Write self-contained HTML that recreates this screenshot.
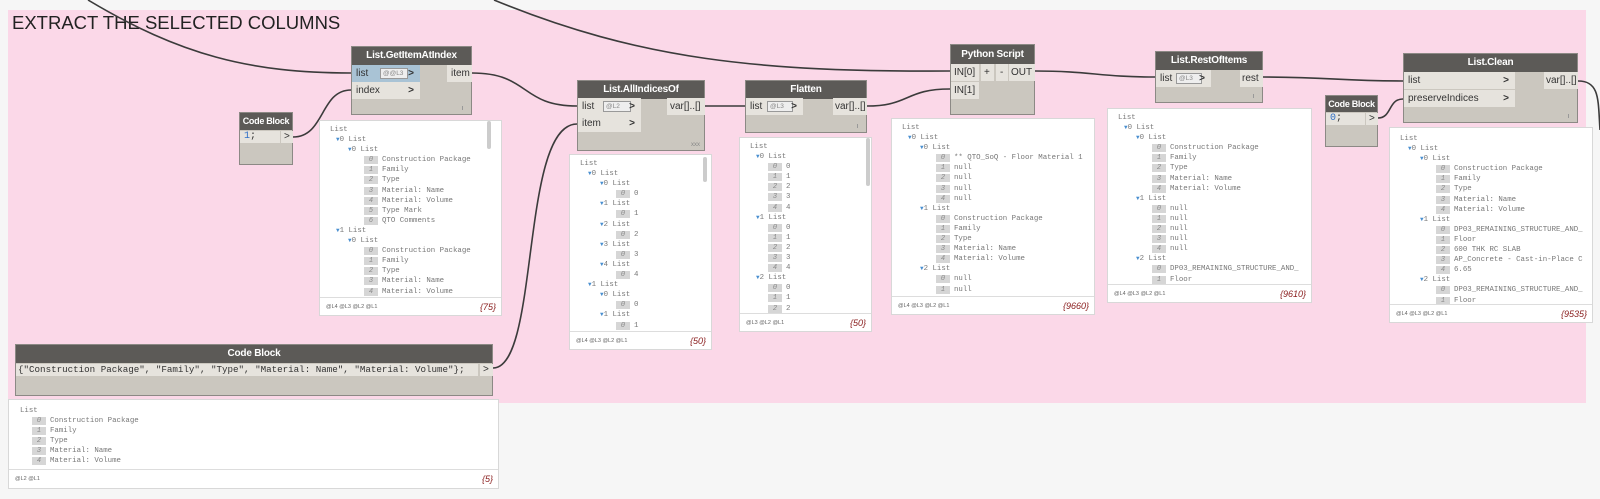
<!DOCTYPE html>
<html><head><meta charset="utf-8">
<style>
*{margin:0;padding:0;box-sizing:border-box}
body{width:1600px;height:499px;background:#f6f6f6;position:relative;overflow:hidden;font-family:"Liberation Sans",sans-serif}
.grp{position:absolute;left:8px;top:10px;width:1578px;height:393px;background:#fbd8e8}
.title{position:absolute;left:12px;top:12px;font-size:18.5px;color:#222;white-space:nowrap}
svg{position:absolute;left:0;top:0}
.node{position:absolute;background:#cbc7bf;border:1px solid #8c8985}
.hd{background:#5c5a57;color:#fff;font-weight:bold;font-size:10px;text-align:center;height:18px;line-height:18px;letter-spacing:-0.2px;white-space:nowrap}
.p{position:absolute;background:#e6e3dd;font-size:10px;color:#333;height:17px;line-height:17px;padding-left:4px;white-space:nowrap;overflow:hidden}
.sel{background:#a9c3d5}
.chev{position:absolute;right:6px;top:0;font-weight:bold;font-size:10px}
.lv{position:absolute;top:3px;height:11px;border:1px solid #999;background:#eee;font-size:6.5px;line-height:9px;color:#888;padding-left:2px}
.pv{position:absolute;background:#fff;border:1px solid #d8d8d8;overflow:hidden}
.ct{position:absolute;left:0;top:4px;right:0;font-family:"Liberation Mono",monospace;font-size:7.4px;color:#777}
.l{height:10.1px;line-height:10.1px;white-space:nowrap}
.a{color:#4a8fd0;font-size:6px}
.b{display:inline-block;width:14px;height:8px;background:#d6d6d6;color:#888;font-style:italic;text-align:center;line-height:8px;margin-right:4px;font-size:7px}
.ft{position:absolute;left:0;right:0;bottom:0;height:18px;border-top:1px solid #ddd;font-size:5.5px;color:#666;line-height:18px;padding-left:6px}
.ft i{position:absolute;right:5px;top:0;font-size:9px;color:#8b2020}
.sb{position:absolute;width:4px;background:#ccc;border-radius:2px}
.code{font-family:"Liberation Mono",monospace;color:#333}
.num{color:#2f6fc7}
.sh{font-size:9px;letter-spacing:-0.3px}
</style></head><body>
<div class="grp"></div>
<div class="title">EXTRACT THE SELECTED COLUMNS</div>

<svg width="1600" height="499" fill="none" stroke="#3b3b3b" stroke-width="1.6">
<path d="M88 0 C180 55,250 73,351 73"/>
<path d="M494 0 C640 60,760 72,950 71"/>
<path d="M293 137 C325 137,320 90,351 90"/>
<path d="M472 73 C530 73,520 106,577 106"/>
<path d="M493 368 C540 368,520 124,577 124"/>
<path d="M705 106 L745 106"/>
<path d="M867 106 C910 106,905 89,950 89"/>
<path d="M1035 71 C1090 71,1100 77,1155 77"/>
<path d="M1263 77 C1330 77,1340 81,1403 81"/>
<path d="M1378 118 C1392 118,1388 99,1403 99"/>
<path d="M1578 81 C1600 81,1598 100,1600 130"/>
</svg>

<div class="node" style="left:239px;top:112px;width:54px;height:53px">
<div class="hd sh" style="height:17px;line-height:17px">Code Block</div>
<div class="p code" style="left:0;top:18px;width:40px;height:12px;line-height:12px;font-size:10px"><span class="num">1</span>;</div>
<div class="p" style="left:41px;top:18px;width:12px;height:12px;line-height:12px;padding-left:3px">&gt;</div>
</div>

<div class="node" style="left:351px;top:46px;width:121px;height:69px">
<div class="hd">List.GetItemAtIndex</div>
<div class="p sel" style="left:0;top:18px;width:68px">list<span class="lv" style="left:28px;width:28px">@@L3</span><span class="chev">&gt;</span></div>
<div class="p" style="left:0;top:35px;width:68px">index<span class="chev">&gt;</span></div>
<div class="p" style="left:95px;top:18px;width:25px">item</div>
<div style="position:absolute;right:8px;bottom:4px;width:1px;height:4px;background:#999"></div>
</div>
<div class="pv" style="left:319px;top:120px;width:183px;height:196px">
<div class="ct">
<div class="l" style="padding-left:10px">List</div>
<div class="l" style="padding-left:16px"><span class="a">▼</span>0 List</div>
<div class="l" style="padding-left:28px"><span class="a">▼</span>0 List</div>
<div class="l" style="padding-left:44px"><span class="b">0</span>Construction Package</div>
<div class="l" style="padding-left:44px"><span class="b">1</span>Family</div>
<div class="l" style="padding-left:44px"><span class="b">2</span>Type</div>
<div class="l" style="padding-left:44px"><span class="b">3</span>Material: Name</div>
<div class="l" style="padding-left:44px"><span class="b">4</span>Material: Volume</div>
<div class="l" style="padding-left:44px"><span class="b">5</span>Type Mark</div>
<div class="l" style="padding-left:44px"><span class="b">6</span>QTO Comments</div>
<div class="l" style="padding-left:16px"><span class="a">▼</span>1 List</div>
<div class="l" style="padding-left:28px"><span class="a">▼</span>0 List</div>
<div class="l" style="padding-left:44px"><span class="b">0</span>Construction Package</div>
<div class="l" style="padding-left:44px"><span class="b">1</span>Family</div>
<div class="l" style="padding-left:44px"><span class="b">2</span>Type</div>
<div class="l" style="padding-left:44px"><span class="b">3</span>Material: Name</div>
<div class="l" style="padding-left:44px"><span class="b">4</span>Material: Volume</div>
</div>
<div class="sb" style="left:167px;top:0;height:28px"></div>
<div class="ft" style="background:#fff">@L4 @L3 @L2 @L1<i>{75}</i></div>
</div>

<div class="node" style="left:577px;top:80px;width:128px;height:71px">
<div class="hd">List.AllIndicesOf</div>
<div class="p" style="left:0;top:17px;width:63px">list<span class="lv" style="left:25px;width:28px">@L2</span><span class="chev">&gt;</span></div>
<div class="p" style="left:0;top:34px;width:63px">item<span class="chev">&gt;</span></div>
<div class="p" style="left:89px;top:17px;width:38px;padding-left:3px">var[]..[]</div>
<div style="position:absolute;right:4px;bottom:2px;font-size:6px;color:#888">xxx</div>
</div>
<div class="pv" style="left:569px;top:154px;width:143px;height:196px">
<div class="ct">
<div class="l" style="padding-left:10px">List</div>
<div class="l" style="padding-left:18px"><span class="a">▼</span>0 List</div>
<div class="l" style="padding-left:30px"><span class="a">▼</span>0 List</div>
<div class="l" style="padding-left:46px"><span class="b">0</span>0</div>
<div class="l" style="padding-left:30px"><span class="a">▼</span>1 List</div>
<div class="l" style="padding-left:46px"><span class="b">0</span>1</div>
<div class="l" style="padding-left:30px"><span class="a">▼</span>2 List</div>
<div class="l" style="padding-left:46px"><span class="b">0</span>2</div>
<div class="l" style="padding-left:30px"><span class="a">▼</span>3 List</div>
<div class="l" style="padding-left:46px"><span class="b">0</span>3</div>
<div class="l" style="padding-left:30px"><span class="a">▼</span>4 List</div>
<div class="l" style="padding-left:46px"><span class="b">0</span>4</div>
<div class="l" style="padding-left:18px"><span class="a">▼</span>1 List</div>
<div class="l" style="padding-left:30px"><span class="a">▼</span>0 List</div>
<div class="l" style="padding-left:46px"><span class="b">0</span>0</div>
<div class="l" style="padding-left:30px"><span class="a">▼</span>1 List</div>
<div class="l" style="padding-left:46px"><span class="b">0</span>1</div>
</div>
<div class="sb" style="left:133px;top:2px;height:25px"></div>
<div class="ft" style="background:#fff">@L4 @L3 @L2 @L1<i>{50}</i></div>
</div>

<div class="node" style="left:745px;top:80px;width:122px;height:53px">
<div class="hd">Flatten</div>
<div class="p" style="left:0;top:17px;width:57px">list<span class="lv" style="left:21px;width:26px">@L3</span><span class="chev">&gt;</span></div>
<div class="p" style="left:87px;top:17px;width:34px;padding-left:2px">var[]..[]</div>
<div style="position:absolute;right:8px;bottom:4px;width:1px;height:4px;background:#999"></div>
</div>
<div class="pv" style="left:739px;top:137px;width:133px;height:195px">
<div class="ct">
<div class="l" style="padding-left:10px">List</div>
<div class="l" style="padding-left:16px"><span class="a">▼</span>0 List</div>
<div class="l" style="padding-left:28px"><span class="b">0</span>0</div>
<div class="l" style="padding-left:28px"><span class="b">1</span>1</div>
<div class="l" style="padding-left:28px"><span class="b">2</span>2</div>
<div class="l" style="padding-left:28px"><span class="b">3</span>3</div>
<div class="l" style="padding-left:28px"><span class="b">4</span>4</div>
<div class="l" style="padding-left:16px"><span class="a">▼</span>1 List</div>
<div class="l" style="padding-left:28px"><span class="b">0</span>0</div>
<div class="l" style="padding-left:28px"><span class="b">1</span>1</div>
<div class="l" style="padding-left:28px"><span class="b">2</span>2</div>
<div class="l" style="padding-left:28px"><span class="b">3</span>3</div>
<div class="l" style="padding-left:28px"><span class="b">4</span>4</div>
<div class="l" style="padding-left:16px"><span class="a">▼</span>2 List</div>
<div class="l" style="padding-left:28px"><span class="b">0</span>0</div>
<div class="l" style="padding-left:28px"><span class="b">1</span>1</div>
<div class="l" style="padding-left:28px"><span class="b">2</span>2</div>
</div>
<div class="sb" style="left:126px;top:0;height:48px"></div>
<div class="ft" style="background:#fff">@L3 @L2 @L1<i>{50}</i></div>
</div>

<div class="node" style="left:950px;top:44px;width:85px;height:71px">
<div class="hd" style="height:19px;line-height:19px">Python Script</div>
<div class="p" style="left:0;top:19px;width:28px;padding-left:3px">IN[0]</div>
<div class="p" style="left:30px;top:19px;width:13px;padding-left:3px">+</div>
<div class="p" style="left:45px;top:19px;width:12px;padding-left:4px">-</div>
<div class="p" style="left:58px;top:19px;width:26px;padding-left:2px">OUT</div>
<div class="p" style="left:0;top:37px;width:28px;padding-left:3px">IN[1]</div>
</div>
<div class="pv" style="left:891px;top:118px;width:204px;height:197px">
<div class="ct">
<div class="l" style="padding-left:10px">List</div>
<div class="l" style="padding-left:16px"><span class="a">▼</span>0 List</div>
<div class="l" style="padding-left:28px"><span class="a">▼</span>0 List</div>
<div class="l" style="padding-left:44px"><span class="b">0</span>** QTO_SoQ - Floor Material 1</div>
<div class="l" style="padding-left:44px"><span class="b">1</span>null</div>
<div class="l" style="padding-left:44px"><span class="b">2</span>null</div>
<div class="l" style="padding-left:44px"><span class="b">3</span>null</div>
<div class="l" style="padding-left:44px"><span class="b">4</span>null</div>
<div class="l" style="padding-left:28px"><span class="a">▼</span>1 List</div>
<div class="l" style="padding-left:44px"><span class="b">0</span>Construction Package</div>
<div class="l" style="padding-left:44px"><span class="b">1</span>Family</div>
<div class="l" style="padding-left:44px"><span class="b">2</span>Type</div>
<div class="l" style="padding-left:44px"><span class="b">3</span>Material: Name</div>
<div class="l" style="padding-left:44px"><span class="b">4</span>Material: Volume</div>
<div class="l" style="padding-left:28px"><span class="a">▼</span>2 List</div>
<div class="l" style="padding-left:44px"><span class="b">0</span>null</div>
<div class="l" style="padding-left:44px"><span class="b">1</span>null</div>
</div>
<div class="ft" style="background:#fff">@L4 @L3 @L2 @L1<i>{9660}</i></div>
</div>

<div class="node" style="left:1155px;top:51px;width:108px;height:52px">
<div class="hd">List.RestOfItems</div>
<div class="p" style="left:0;top:18px;width:55px">list<span class="lv" style="left:20px;width:26px">@L3</span><span class="chev">&gt;</span></div>
<div class="p" style="left:84px;top:18px;width:23px;padding-left:2px">rest</div>
<div style="position:absolute;right:8px;bottom:4px;width:1px;height:4px;background:#999"></div>
</div>
<div class="pv" style="left:1107px;top:108px;width:205px;height:195px">
<div class="ct">
<div class="l" style="padding-left:10px">List</div>
<div class="l" style="padding-left:16px"><span class="a">▼</span>0 List</div>
<div class="l" style="padding-left:28px"><span class="a">▼</span>0 List</div>
<div class="l" style="padding-left:44px"><span class="b">0</span>Construction Package</div>
<div class="l" style="padding-left:44px"><span class="b">1</span>Family</div>
<div class="l" style="padding-left:44px"><span class="b">2</span>Type</div>
<div class="l" style="padding-left:44px"><span class="b">3</span>Material: Name</div>
<div class="l" style="padding-left:44px"><span class="b">4</span>Material: Volume</div>
<div class="l" style="padding-left:28px"><span class="a">▼</span>1 List</div>
<div class="l" style="padding-left:44px"><span class="b">0</span>null</div>
<div class="l" style="padding-left:44px"><span class="b">1</span>null</div>
<div class="l" style="padding-left:44px"><span class="b">2</span>null</div>
<div class="l" style="padding-left:44px"><span class="b">3</span>null</div>
<div class="l" style="padding-left:44px"><span class="b">4</span>null</div>
<div class="l" style="padding-left:28px"><span class="a">▼</span>2 List</div>
<div class="l" style="padding-left:44px"><span class="b">0</span>DP03_REMAINING_STRUCTURE_AND_</div>
<div class="l" style="padding-left:44px"><span class="b">1</span>Floor</div>
</div>
<div class="ft" style="background:#fff">@L4 @L3 @L2 @L1<i>{9610}</i></div>
</div>

<div class="node" style="left:1325px;top:95px;width:53px;height:52px">
<div class="hd sh" style="height:16px;line-height:16px">Code Block</div>
<div class="p code" style="left:0;top:17px;width:39px;height:12px;line-height:12px;font-size:10px"><span class="num">0</span>;</div>
<div class="p" style="left:40px;top:17px;width:12px;height:12px;line-height:12px;padding-left:3px">&gt;</div>
</div>

<div class="node" style="left:1403px;top:53px;width:175px;height:70px">
<div class="hd">List.Clean</div>
<div class="p" style="left:0;top:18px;width:111px">list<span class="chev">&gt;</span></div>
<div class="p" style="left:0;top:36px;width:111px">preserveIndices<span class="chev">&gt;</span></div>
<div class="p" style="left:140px;top:18px;width:34px;padding-left:2px">var[]..[]</div>
<div style="position:absolute;right:8px;bottom:4px;width:1px;height:4px;background:#999"></div>
</div>
<div class="pv" style="left:1389px;top:127px;width:204px;height:196px">
<div class="ct" style="top:6px">
<div class="l" style="padding-left:10px">List</div>
<div class="l" style="padding-left:18px"><span class="a">▼</span>0 List</div>
<div class="l" style="padding-left:30px"><span class="a">▼</span>0 List</div>
<div class="l" style="padding-left:46px"><span class="b">0</span>Construction Package</div>
<div class="l" style="padding-left:46px"><span class="b">1</span>Family</div>
<div class="l" style="padding-left:46px"><span class="b">2</span>Type</div>
<div class="l" style="padding-left:46px"><span class="b">3</span>Material: Name</div>
<div class="l" style="padding-left:46px"><span class="b">4</span>Material: Volume</div>
<div class="l" style="padding-left:30px"><span class="a">▼</span>1 List</div>
<div class="l" style="padding-left:46px"><span class="b">0</span>DP03_REMAINING_STRUCTURE_AND_</div>
<div class="l" style="padding-left:46px"><span class="b">1</span>Floor</div>
<div class="l" style="padding-left:46px"><span class="b">2</span>600 THK RC SLAB</div>
<div class="l" style="padding-left:46px"><span class="b">3</span>AP_Concrete - Cast-in-Place C</div>
<div class="l" style="padding-left:46px"><span class="b">4</span>6.65</div>
<div class="l" style="padding-left:30px"><span class="a">▼</span>2 List</div>
<div class="l" style="padding-left:46px"><span class="b">0</span>DP03_REMAINING_STRUCTURE_AND_</div>
<div class="l" style="padding-left:46px"><span class="b">1</span>Floor</div>
</div>
<div class="ft" style="background:#fff">@L4 @L3 @L2 @L1<i>{9535}</i></div>
</div>

<div class="node" style="left:15px;top:344px;width:478px;height:52px">
<div class="hd">Code Block</div>
<div class="p code" style="left:0;top:19px;width:462px;height:12px;line-height:12px;font-size:9.2px;padding-left:2px">{"Construction Package", "Family", "Type", "Material: Name", "Material: Volume"};</div>
<div class="p" style="left:464px;top:19px;width:13px;height:12px;line-height:12px;padding-left:3px">&gt;</div>
</div>
<div class="pv" style="left:8px;top:399px;width:491px;height:90px">
<div class="ct" style="top:6px">
<div class="l" style="padding-left:11px">List</div>
<div class="l" style="padding-left:23px"><span class="b">0</span>Construction Package</div>
<div class="l" style="padding-left:23px"><span class="b">1</span>Family</div>
<div class="l" style="padding-left:23px"><span class="b">2</span>Type</div>
<div class="l" style="padding-left:23px"><span class="b">3</span>Material: Name</div>
<div class="l" style="padding-left:23px"><span class="b">4</span>Material: Volume</div>
</div>
<div class="ft" style="background:#fff;height:19px">@L2 @L1<i>{5}</i></div>
</div>

</body></html>
